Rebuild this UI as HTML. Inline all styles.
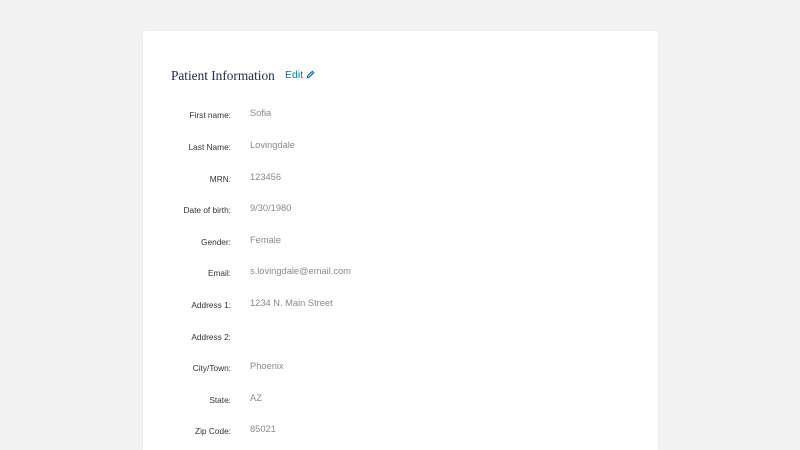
<!DOCTYPE html>
<html><head><style>
html,body{margin:0;height:450px;overflow:hidden}
body{background:#f1f2f1;width:800px;font-family:"Liberation Sans",sans-serif;position:relative}
.card{position:absolute;left:143px;top:31px;width:515px;height:419px;background:#fff;border-radius:3px 3px 0 0;box-shadow:0 0 2px rgba(0,0,0,.06)}
h1{position:absolute;left:28px;top:37px;margin:0;font:13.3px "Liberation Serif",serif;color:#1f2a44;white-space:nowrap}
.edit{position:absolute;left:142px;top:38px;font-size:10.5px;color:#1a6f9a}
.row{position:absolute;left:0;width:515px;height:20px}
.l{position:absolute;right:427px;top:3px;font-size:8.3px;color:#333;white-space:nowrap}
.v{position:absolute;left:107px;top:1px;font-size:9.3px;color:#8a8a8a;white-space:nowrap}
</style></head><body>
<div class="card">
<h1>Patient Information</h1>
<div class="edit">Edit <svg width="9" height="9" viewBox="0 0 10 10" style="vertical-align:-1px"><path d="M1.5 8.5 L2 6.5 L7 1.5 L8.5 3 L3.5 8 Z" fill="none" stroke="#1a6f9a" stroke-width="1.3"/></svg></div>
<div class="row" style="top:76px"><span class="l">First name:</span><span class="v">Sofia</span></div>
<div class="row" style="top:108px"><span class="l">Last Name:</span><span class="v">Lovingdale</span></div>
<div class="row" style="top:140px"><span class="l">MRN:</span><span class="v">123456</span></div>
<div class="row" style="top:171px"><span class="l">Date of birth:</span><span class="v">9/30/1980</span></div>
<div class="row" style="top:203px"><span class="l">Gender:</span><span class="v">Female</span></div>
<div class="row" style="top:234px"><span class="l">Email:</span><span class="v">s.lovingdale@email.com</span></div>
<div class="row" style="top:266px"><span class="l">Address 1:</span><span class="v">1234 N. Main Street</span></div>
<div class="row" style="top:298px"><span class="l">Address 2:</span><span class="v"></span></div>
<div class="row" style="top:329px"><span class="l">City/Town:</span><span class="v">Phoenix</span></div>
<div class="row" style="top:361px"><span class="l">State:</span><span class="v">AZ</span></div>
<div class="row" style="top:392px"><span class="l">Zip Code:</span><span class="v">85021</span></div>
</div>
</body></html>
